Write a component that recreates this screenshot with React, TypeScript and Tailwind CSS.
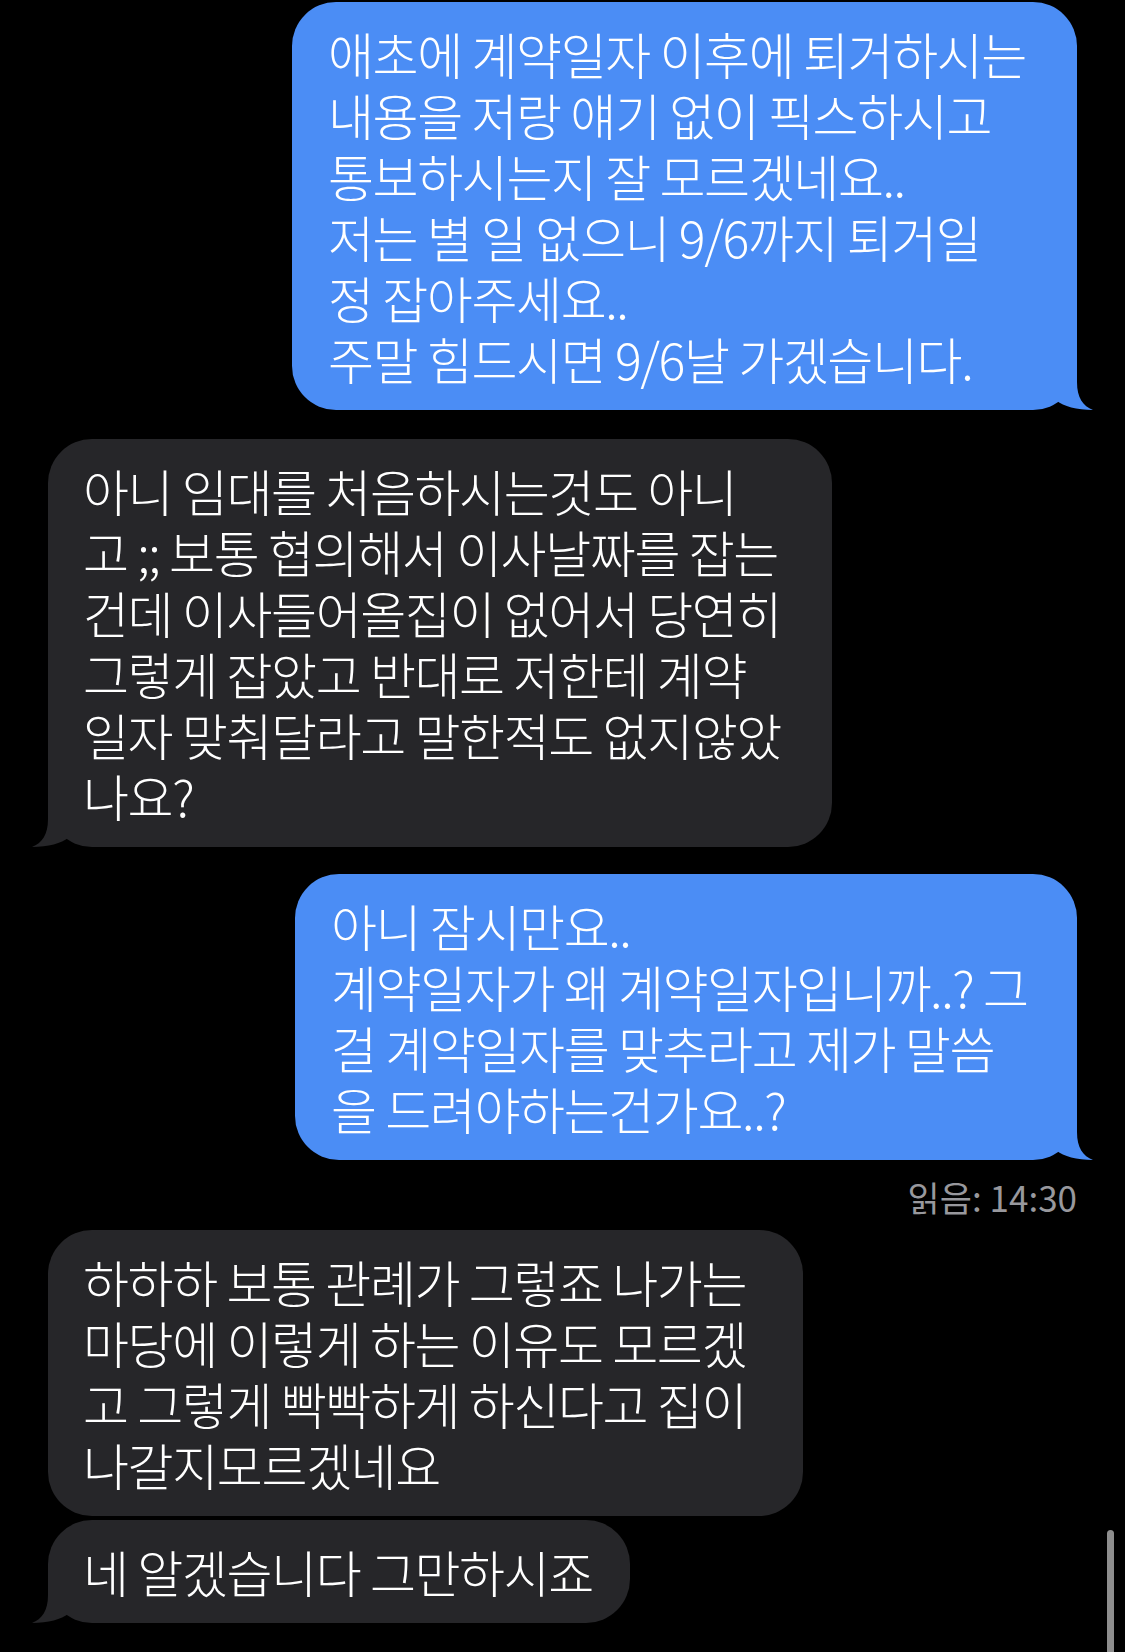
import { Fragment, ReactNode } from 'react';

type Side = 'me' | 'them';

interface Message {
  id: number;
  side: Side;
  lines: string[];
  width: string;
  tail: boolean;
  spacing: string;
}

const messages: Message[] = [
  {
    id: 1,
    side: 'me',
    width: 'w-[785px]',
    tail: true,
    spacing: 'mt-[2px]',
    lines: [
      '애초에 계약일자 이후에 퇴거하시는',
      '내용을 저랑 얘기 없이 픽스하시고',
      '통보하시는지 잘 모르겠네요..',
      '저는 별 일 없으니 9/6까지 퇴거일',
      '정 잡아주세요..',
      '주말 힘드시면 9/6날 가겠습니다.',
    ],
  },
  {
    id: 2,
    side: 'them',
    width: 'w-[784px]',
    tail: true,
    spacing: 'mt-[29px]',
    lines: [
      '아니 임대를 처음하시는것도 아니',
      '고 ;; 보통 협의해서 이사날짜를 잡는',
      '건데 이사들어올집이 없어서 당연히',
      '그렇게 잡았고 반대로 저한테 계약',
      '일자 맞춰달라고 말한적도 없지않았',
      '나요?',
    ],
  },
  {
    id: 3,
    side: 'me',
    width: 'w-[782px]',
    tail: true,
    spacing: 'mt-[27px]',
    lines: [
      '아니 잠시만요..',
      '계약일자가 왜 계약일자입니까..? 그',
      '걸 계약일자를 맞추라고 제가 말씀',
      '을 드려야하는건가요..?',
    ],
  },
  {
    id: 4,
    side: 'them',
    width: 'w-[755px]',
    tail: false,
    spacing: 'mt-[15px]',
    lines: [
      '하하하 보통 관례가 그렇죠 나가는',
      '마당에 이렇게 하는 이유도 모르겠',
      '고 그렇게 빡빡하게 하신다고 집이',
      '나갈지모르겠네요',
    ],
  },
  {
    id: 5,
    side: 'them',
    width: 'w-[582px]',
    tail: true,
    spacing: 'mt-[4px]',
    lines: ['네 알겠습니다 그만하시죠'],
  },
];

// Bubble tail drawn at the bottom corner; mirrored for incoming bubbles
const Tail = ({ side }: { side: Side }) => (
  <svg
    width="46"
    height="50"
    viewBox="0 0 46 50"
    className={`absolute bottom-0 ${side === 'me' ? '-right-[16px] fill-[#4b8df5]' : '-left-[16px] -scale-x-100 fill-[#262629]'}`}
  >
    <path d="M3 0 L30 0 L30 22 C30 38 36 46 46 50 C30 50 16 46 10 41 L3 41 Z" />
  </svg>
);

const Bubble = ({ msg }: { msg: Message }) => {
  const mine = msg.side === 'me';
  return (
    <div className={`relative ${msg.width} ${msg.spacing} rounded-[44px] py-[21px] ${mine ? 'self-end bg-[#4b8df5] pl-[36px]' : 'self-start bg-[#262629] pl-[35px]'}`}>
      <p className="whitespace-nowrap text-[50px] font-light leading-[61px] tracking-[-1.4px] text-white">
        {msg.lines.map((line, i) => (
          <Fragment key={i}>
            {i > 0 && <br />}
            {line}
          </Fragment>
        ))}
      </p>
      {msg.tail && <Tail side={msg.side} />}
    </div>
  );
};

const ReadReceipt = ({ children }: { children: ReactNode }) => (
  <div className="mt-[19px] self-end text-[35px] leading-[36px] text-[#98989d]">{children}</div>
);

export default function App() {
  return (
    <div
      className="relative flex h-[1652px] w-[1125px] flex-col overflow-hidden bg-black px-[48px]"
      style={{ fontFamily: '"Noto Sans CJK KR", "Noto Sans", sans-serif' }}
    >
      {messages.map((msg) => (
        <div key={msg.id} className="contents">
          <Bubble msg={msg} />
          {msg.id === 3 && <ReadReceipt>읽음: 14:30</ReadReceipt>}
        </div>
      ))}

      {/* scroll indicator */}
      <div className="absolute right-[11px] top-[1530px] h-[140px] w-[7px] rounded-full bg-[#8e8e8e]" />
    </div>
  );
}
